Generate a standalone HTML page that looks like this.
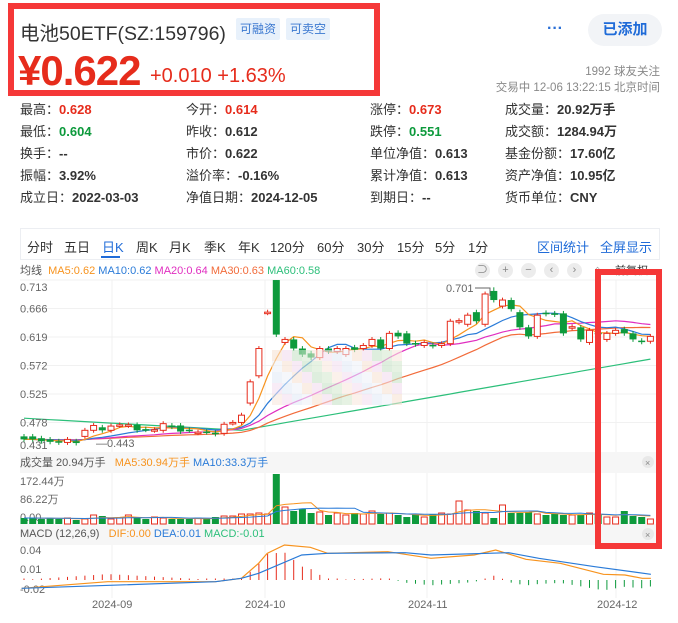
<!DOCTYPE html>
<html><head><meta charset="utf-8">
<style>
*{margin:0;padding:0;box-sizing:border-box}
body{width:678px;height:623px;background:#fff;font-family:"Liberation Sans","Noto Sans CJK SC",sans-serif;color:#333;position:relative;overflow:hidden}
.a{position:absolute;white-space:nowrap}
.tag{position:absolute;top:18px;height:22px;line-height:22px;font-size:12px;color:#3a78d0;background:#e8f1fb;border-radius:2px;padding:0 4px}
.st{position:absolute;font-size:13px;line-height:16px}
.st b{font-weight:bold}
.r{color:#e62c1c}.g{color:#0d9a3c}
.tab{position:absolute;top:237px;font-size:13px;color:#333}
.ic{position:absolute;top:263px;width:15px;height:15px;border-radius:50%;background:#ececec;color:#888;font-size:11px;line-height:15px;text-align:center}
</style></head><body>
<div class="a" style="left:8px;top:3px;width:372px;height:93px;border:6px solid #f53838"></div>
<div class="a" style="left:20px;top:17px;font-size:19.5px;color:#333">电池50ETF(SZ:159796)</div>
<div class="tag" style="left:236px">可融资</div>
<div class="tag" style="left:286px">可卖空</div>
<div class="a r" style="left:18px;top:47px;font-size:42px;font-weight:bold;letter-spacing:-1px">¥0.622</div>
<div class="a r" style="left:150px;top:65px;font-size:20px">+0.010 +1.63%</div>
<div class="a" style="left:547px;top:20px;font-size:16px;color:#2a6fd6;font-weight:bold">···</div>
<div class="a" style="left:588px;top:14px;width:74px;height:32px;border-radius:16px;background:#f2f4f7;color:#1f6bd8;font-size:15px;font-weight:bold;text-align:center;line-height:32px">已添加</div>
<div class="a" style="right:18px;top:63px;font-size:11.5px;color:#888">1992 球友关注</div>
<div class="a" style="right:18px;top:79px;font-size:11.5px;color:#888">交易中 12-06 13:22:15 北京时间</div>

<div class="st" style="left:20px;top:102px">最高：<b class="r">0.628</b></div>
<div class="st" style="left:186px;top:102px">今开：<b class="r">0.614</b></div>
<div class="st" style="left:370px;top:102px">涨停：<b class="r">0.673</b></div>
<div class="st" style="left:505px;top:102px">成交量：<b>20.92万手</b></div>
<div class="st" style="left:20px;top:124px">最低：<b class="g">0.604</b></div>
<div class="st" style="left:186px;top:124px">昨收：<b>0.612</b></div>
<div class="st" style="left:370px;top:124px">跌停：<b class="g">0.551</b></div>
<div class="st" style="left:505px;top:124px">成交额：<b>1284.94万</b></div>
<div class="st" style="left:20px;top:146px">换手：<b>--</b></div>
<div class="st" style="left:186px;top:146px">市价：<b>0.622</b></div>
<div class="st" style="left:370px;top:146px">单位净值：<b>0.613</b></div>
<div class="st" style="left:505px;top:146px">基金份额：<b>17.60亿</b></div>
<div class="st" style="left:20px;top:168px">振幅：<b>3.92%</b></div>
<div class="st" style="left:186px;top:168px">溢价率：<b>-0.16%</b></div>
<div class="st" style="left:370px;top:168px">累计净值：<b>0.613</b></div>
<div class="st" style="left:505px;top:168px">资产净值：<b>10.95亿</b></div>
<div class="st" style="left:20px;top:190px">成立日：<b>2022-03-03</b></div>
<div class="st" style="left:186px;top:190px">净值日期：<b>2024-12-05</b></div>
<div class="st" style="left:370px;top:190px">到期日：<b>--</b></div>
<div class="st" style="left:505px;top:190px">货币单位：<b>CNY</b></div>

<div class="a" style="left:20px;top:228px;width:640px;height:32px;border:1px solid #eceef2"></div>
<div class="tab" style="left:27px">分时</div>
<div class="tab" style="left:64px">五日</div>
<div class="tab" style="left:102px;color:#1f6bd8">日K</div>
<div class="a" style="left:101px;top:256px;width:19px;height:2px;background:#1f6bd8"></div>
<div class="tab" style="left:136px">周K</div>
<div class="tab" style="left:169px">月K</div>
<div class="tab" style="left:204px">季K</div>
<div class="tab" style="left:238px">年K</div>
<div class="tab" style="left:270px">120分</div>
<div class="tab" style="left:317px">60分</div>
<div class="tab" style="left:357px">30分</div>
<div class="tab" style="left:397px">15分</div>
<div class="tab" style="left:435px">5分</div>
<div class="tab" style="left:468px">1分</div>
<div class="tab" style="left:537px;color:#1f6bd8">区间统计</div>
<div class="tab" style="left:600px;color:#1f6bd8">全屏显示</div>

<div class="a" style="left:20px;top:262px;font-size:11px"><span style="color:#555">均线</span>&nbsp; <span style="color:#f7931e">MA5:0.62</span> <span style="color:#2a7bd8">MA10:0.62</span> <span style="color:#e02ec0">MA20:0.64</span> <span style="color:#f26b3a">MA30:0.63</span> <span style="color:#2cbf7a">MA60:0.58</span></div>
<div class="ic" style="left:475px">⊃</div>
<div class="ic" style="left:498px">+</div>
<div class="ic" style="left:521px">−</div>
<div class="ic" style="left:544px">‹</div>
<div class="ic" style="left:567px">›</div>
<div class="ic" style="left:590px;background:none">⌂</div>
<div class="a" style="left:615px;top:262px;font-size:11px;color:#333">前复权</div>

<svg class="a" style="left:0;top:0" width="678" height="623" id="cv"></svg>

<div class="a" style="left:595px;top:269px;width:67px;height:280px;border:6px solid #f53838"></div>

<script>
var cv=document.getElementById('cv'),h='';
function X(i){return 24+i*8.7}
function Y(p){return 337+(0.619-p)*606}
[0.713,0.666,0.619,0.572,0.525,0.478].forEach(function(p){h+='<line x1="20" x2="660" y1="'+Y(p)+'" y2="'+Y(p)+'" stroke="#f1f1f1"/>'});
[112,265,427,616].forEach(function(x){h+='<line x1="'+x+'" x2="'+x+'" y1="280" y2="598" stroke="#f1f1f1"/>'});
h+='<rect x="20" y="452" width="640" height="21" fill="#f6f6f6"/><rect x="20" y="524" width="640" height="21" fill="#f6f6f6"/>';
var C=[[.452,.447],[.45,.446],[.447,.445],[.445,.45],[.447,.444],[.455,.465],[.465,.473],[.47,.465],[.465,.472],[.473,.474],[.473,.474],[.474,.465],[.467,.466],[.465,.466],[.465,.476],[.473,.471],[.473,.463],[.466,.465],[.461,.462],[.463,.462],[.461,.459],[.46,.475],[.477,.478],[.478,.49],[.51,.545],[.555,.6],[.659,.66],[.713,.623],[.61,.615],[.615,.6],[.6,.59],[.592,.585],[.585,.6],[.6,.595],[.595,.6],
[.59,.6],[.602,.598],[.6,.605],[.605,.615],[.615,.6],[.6,.625],[.626,.62],[.625,.608],[.609,.607],[.605,.61],[.606,.604],[.605,.608],[.608,.645],[.644,.646],[.64,.655],[.66,.645],[.64,.69],[.695,.68],[.67,.68],[.68,.665],[.66,.635],[.635,.62],[.62,.655],[.659,.657],[.658,.656],[.658,.625],[.634,.636],[.635,.615],[.61,.63],[.626,.624],[.615,.625],[.625,.63],[.632,.625],[.625,.615],[.613,.611],[.612,.62]];
while(C.length<73)C.unshift([.455,.45]);
var cl=C.map(function(c){return c[1]});
function ma(n){return cl.map(function(_,i){var s=0;for(var k=i-n+1;k<=i;k++)s+=cl[Math.max(0,k)];return s/n})}
function line(arr,col){var d='';arr.forEach(function(v,i){d+=(i?'L':'M')+X(i).toFixed(1)+' '+Y(v).toFixed(1)});h+='<path d="'+d+'" fill="none" stroke="'+col+'" stroke-width="1.2"/>'}
var m60=cl.map(function(_,i){return i<25?0.485-i*0.0008:0.465+(i-25)*0.0025});
line(m60,'#2cbf7a');line(ma(30),'#f26b3a');line(ma(20),'#e02ec0');line(ma(10),'#2a7bd8');line(ma(5),'#f7931e');
C.forEach(function(c,i){var o=c[0],cc=c[1],up=cc>=o,col=up?'#e62c1c':'#0d9a3c',x=X(i);
 var hi=Math.max(o,cc)+0.004,lo=Math.min(o,cc)-0.004;if(i==29)hi=.713;if(i==54)hi=.701;
 h+='<line x1="'+x+'" x2="'+x+'" y1="'+Y(hi)+'" y2="'+Y(lo)+'" stroke="'+col+'"/>';
 var t=Y(Math.max(o,cc)),bh=Math.max(1.5,Math.abs(Y(o)-Y(cc)));
 h+=up?'<rect x="'+(x-3)+'" y="'+t+'" width="6" height="'+bh+'" fill="#fff" stroke="'+col+'"/>':'<rect x="'+(x-3.5)+'" y="'+t+'" width="7" height="'+bh+'" fill="'+col+'"/>';});
var mc=['#f7e2d4','#d6e9d0','#e2ebf7','#f1dcee','#f8e8de','#eef2f8','#c8e3c8','#f4e0f0'];
for(var r=0;r<5;r++)for(var k=0;k<13;k++){h+='<rect x="'+(272+k*10)+'" y="'+(350+r*11)+'" width="10" height="11" fill="'+mc[(r*5+k*3)%8]+'" opacity="0.6"/>'}
[[0.666,'0.666'],[0.619,'0.619'],[0.572,'0.572'],[0.525,'0.525'],[0.478,'0.478']].forEach(function(l){h+='<text x="20" y="'+(Y(l[0])+4)+'" font-size="11" fill="#666">'+l[1]+'</text>'});
h+='<text x="20" y="291" font-size="11" fill="#666">0.713</text>';
h+='<text x="20" y="449" font-size="11" fill="#666">0.431</text><text x="96" y="447" font-size="11" fill="#666">—0.443</text>';
h+='<text x="446" y="292" font-size="11" fill="#666">0.701</text><path d="M475 288H490V296" stroke="#666" fill="none"/>';
h+='<text x="20" y="466" font-size="11" fill="#555">成交量 20.94万手 &nbsp;&nbsp;<tspan fill="#f7931e">MA5:30.94万手</tspan> <tspan fill="#2a7bd8">MA10:33.3万手</tspan></text>';
h+='<circle cx="648" cy="462" r="6" fill="#e8e8e8"/><text x="645" y="466" font-size="9" fill="#888">×</text>';
h+='<text x="20" y="485" font-size="11" fill="#666">172.44万</text><text x="20" y="503" font-size="11" fill="#666">86.22万</text><text x="20" y="521" font-size="11" fill="#666">0.00</text>';
var V=[6,6,5,6,5,6,4,5,9,8,5,6,9,6,5,7,6,5,5,5,6,5,7,8,8,10,10,11,10,50,17,13,15,11,12,9,11,9,11,10,13,10,11,9,7,10,7,10,11,10,23,14,13,11,6,19,11,11,12,10,9,10,9,9,9,11,10,7,7,13,8,7,5];
V.forEach(function(v,i){var up=C[i][1]>=C[i][0],col=up?'#e62c1c':'#0d9a3c',x=X(i);
 h+=up?'<rect x="'+(x-3)+'" y="'+(524-v)+'" width="6" height="'+v+'" fill="#fff" stroke="'+col+'"/>':'<rect x="'+(x-3.5)+'" y="'+(524-v)+'" width="7" height="'+v+'" fill="'+col+'"/>'});
function mav(n,col){var d='';V.forEach(function(_,i){var s=0;for(var k=i-n+1;k<=i;k++)s+=V[Math.max(0,k)];d+=(i?'L':'M')+X(i).toFixed(1)+' '+(524-s/n).toFixed(1)});h+='<path d="'+d+'" fill="none" stroke="'+col+'" stroke-width="1"/>'}
mav(5,'#f7931e');mav(10,'#2a7bd8');
h+='<text x="20" y="537" font-size="11" fill="#555">MACD (12,26,9) &nbsp;&nbsp;<tspan fill="#f7931e">DIF:0.00</tspan> <tspan fill="#2a7bd8">DEA:0.01</tspan> <tspan fill="#2cbf7a">MACD:-0.01</tspan></text>';
h+='<circle cx="648" cy="534" r="6" fill="#e8e8e8"/><text x="645" y="538" font-size="9" fill="#888">×</text>';
h+='<text x="20" y="554" font-size="11" fill="#666">0.04</text><text x="20" y="573" font-size="11" fill="#666">0.01</text><text x="20" y="593" font-size="11" fill="#666">-0.02</text>';
function interp(pts,x){for(var k=1;k<pts.length;k++){if(x<=pts[k][0]){var a=pts[k-1],b=pts[k],t=(x-a[0])/(b[0]-a[0]);return a[1]+(b[1]-a[1])*t}}return pts[pts.length-1][1]}
var dea=[[50,445],[500,425],[560,415],[600,400],[700,345],[760,340],[940,338],[1000,345],[1180,338],[1250,355],[1380,380],[1510,403]].map(function(p){return[p[0]/2.32,p[1]/3+440]});
var dif=[[50,445],[250,425],[500,425],[560,415],[600,370],[620,340],[660,315],[720,322],[760,340],[900,335],[1000,355],[1100,345],[1150,330],[1220,358],[1300,370],[1400,403],[1450,405],[1490,415],[1510,415]].map(function(p){return[p[0]/2.32,p[1]/3+440]});
C.forEach(function(_,i){var x=X(i),d=(interp(dea,x)-interp(dif,x))*1.6;if(Math.abs(d)<0.5)d=d<0?-1.5:1.5;
 h+='<line x1="'+x+'" x2="'+x+'" y1="580" y2="'+(580-d)+'" stroke="'+(d>0?'#e62c1c':'#0d9a3c')+'"/>'});
function pl(p,col){h+='<path d="M'+p.map(function(q){return q[0].toFixed(1)+' '+q[1].toFixed(1)}).join('L')+'" fill="none" stroke="'+col+'" stroke-width="1.2"/>'}
pl(dif,'#f7931e');pl(dea,'#2a7bd8');
[['2024-09',92],['2024-10',245],['2024-11',408],['2024-12',597]].forEach(function(d){h+='<text x="'+d[1]+'" y="608" font-size="11" fill="#666">'+d[0]+'</text>'});
cv.innerHTML=h;
</script>
</body></html>
